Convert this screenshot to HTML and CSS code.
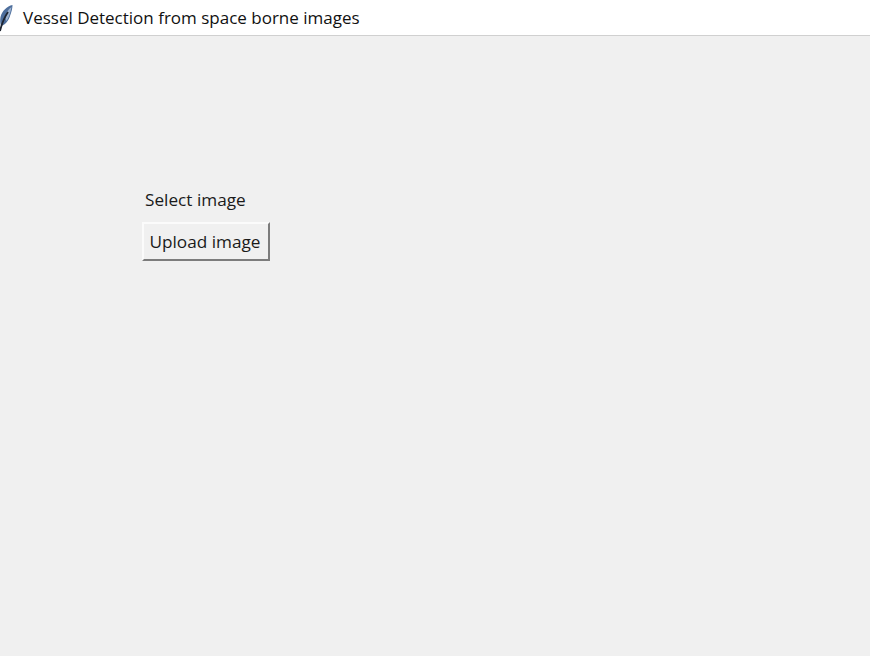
FILE: index.html
```html
<!DOCTYPE html>
<html lang="en">
<head>
<meta charset="utf-8">
<title>Vessel Detection from space borne images</title>
<link rel="stylesheet" href="styles.css">
</head>
<body>
<div class="window">
  <header class="titlebar">
    <svg class="feather" width="14" height="30" viewBox="0 0 14 30" aria-hidden="true">
      <path d="M13.500 2C8 3 3 8 1.500 14C1 17 1 20 2 23C6 22 9.500 18 11 13C12.500 9 13.500 5 13.500 2Z" fill="#4d6e9c"/>
      <path d="M12.500 4C9.500 6 7 10 6 14C6.500 16 7 17 7.500 18C9.500 15 11.500 10 12.500 4Z" fill="#9db2cf"/>
      <path d="M9 9C5.500 14 3 20 1 28" fill="none" stroke="#1d2430" stroke-width="1.800"/>
    </svg>
    <span class="title">Vessel Detection from space borne images</span>
  </header>
  <main class="content">
    <div class="panel">
      <div class="label">Select image</div>
      <button class="button" type="button">Upload image</button>
    </div>
  </main>
</div>
</body>
</html>
```
FILE: styles.css
```css
html, body {
  margin: 0;
  padding: 0;
  height: 100%;
}
body {
  background: #f0f0f0;
  font-family: "Open Sans", "Noto Sans", sans-serif;
  color: #1a1a1a;
  overflow: hidden;
}
.window {
  display: flex;
  flex-direction: column;
  height: 656px;
}
.titlebar {
  display: flex;
  align-items: center;
  height: 35px;
  background: #ffffff;
  border-bottom: 1px solid #d0d0d0;
  color: #111111;
}
.feather {
  flex: none;
  margin-left: -1px;
  margin-right: 10px;
}
.title {
  font-size: 17px;
  white-space: nowrap;
}
.content {
  flex: 1;
  background: #f0f0f0;
  padding: 151px 0 0 142px;
}
.panel {
  display: flex;
  flex-direction: column;
  align-items: flex-start;
}
.label {
  font-size: 17.200px;
  line-height: 24px;
  padding: 1px 0 0 3px;
  margin-bottom: 10px;
}
.button {
  box-sizing: border-box;
  width: 128px;
  height: 39px;
  padding: 0 2px 0 0;
  background: #f0f0f0;
  color: #1a1a1a;
  font-family: inherit;
  font-size: 17.200px;
  border: 2px solid;
  border-color: #fbfbfb #7c7c7c #7c7c7c #fbfbfb;
  outline: 0;
}
```
